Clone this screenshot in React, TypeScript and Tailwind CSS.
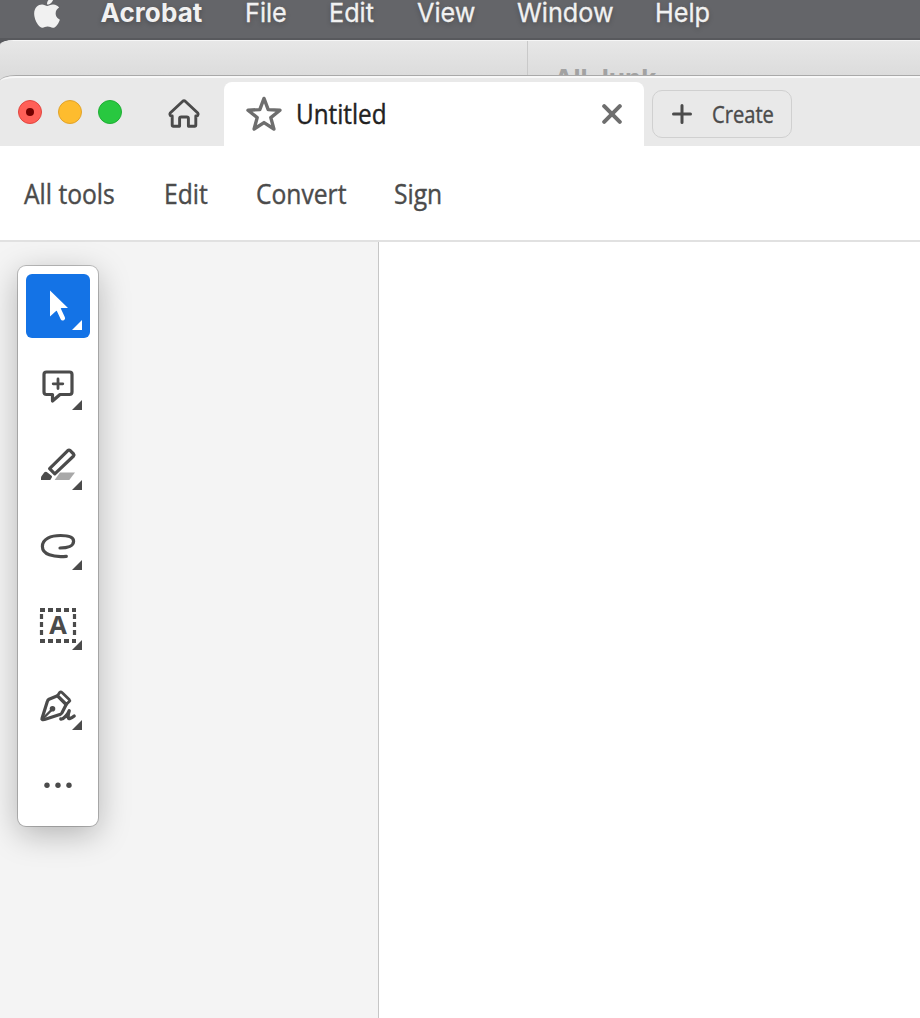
import type { ReactNode } from 'react';
import { FaApple } from 'react-icons/fa';

const menuItems = [
    { label: 'File', className: 'w-[84px]' },
    { label: 'Edit', className: 'w-[88px]' },
    { label: 'View', className: 'w-[100px]' },
    { label: 'Window', className: 'w-[138px]' },
    { label: 'Help', className: 'w-[60px]' },
];

const toolbarItems = [
    { label: 'All tools', className: 'w-[140px]' },
    { label: 'Edit', className: 'w-[92px]' },
    { label: 'Convert', className: 'w-[138px]' },
    { label: 'Sign', className: 'w-[60px]' },
];

function MenuBar() {
    return (
        <header className="flex h-[39px] shrink-0 items-start border-b border-[#58595d] bg-[#646569] font-['Inter',sans-serif] text-[26px] leading-[26px] text-[#f1f1f1] [text-shadow:0_2px_5px_rgba(0,0,0,0.25)]">
            <FaApple className="-mt-[5px] ml-[33px] h-[35px] w-[28px] shrink-0" />
            <span className="ml-[39.5px] w-[144px] shrink-0 font-bold tracking-[0.1px]">Acrobat</span>
            {menuItems.map((item) => (
                <span key={item.label} className={`shrink-0 [-webkit-text-stroke:0.3px] ${item.className}`}>
                    <span className="inline-block origin-left scale-x-[0.97]">{item.label}</span>
                </span>
            ))}
        </header>
    );
}

function TrafficLights() {
    return (
        <div className="flex gap-4">
            <span className="flex size-6 items-center justify-center rounded-full border border-[#e2463f] bg-[#ff5f57]">
                <span className="size-2 rounded-full bg-[#730000]" />
            </span>
            <span className="size-6 rounded-full border border-[#e1a32a] bg-[#febc2e]" />
            <span className="size-6 rounded-full border border-[#1fae34] bg-[#28c840]" />
        </div>
    );
}

function TabBar() {
    return (
        <div className="flex h-[70px] shrink-0 items-end rounded-tl-[16px_6px] border-t-2 border-[#f8f8f8] bg-[#e9e9e9] font-['Open_Sans',sans-serif]">
            <div className="flex h-16 w-[224px] items-center pb-1 pl-[18px]">
                <TrafficLights />
                <svg className="ml-[45px] mt-[3px] size-[34px]" viewBox="0 0 34 34" fill="none" stroke="#4b4b4b" strokeWidth="2.9" strokeLinejoin="round">
                    <path d="M18.2 4.2 Q17 3.2 15.8 4.2 L3.2 16 Q2.3 17.2 3.2 18.3 Q4 19 5.2 19 V28 Q5.2 29.2 6.4 29.2 H12.6 V21.6 Q12.6 20 14.2 20 H19.8 Q21.4 20 21.4 21.6 V29.2 H27.6 Q28.8 29.2 28.8 28 V19 Q30 19 30.8 18.3 Q31.7 17.2 30.8 16 Z" />
                </svg>
            </div>
            <div className="flex h-16 w-[420px] items-center rounded-t-lg bg-white pl-[21px]">
                <svg className="size-[38px] shrink-0" viewBox="0 0 38 38" fill="none" stroke="#6e6e6e" strokeWidth="3.4" strokeLinejoin="round">
                    <path d="M19 3.4 L23.2 14.6 L35 15.2 L25.8 22.6 L28.9 34 L19 27.6 L9.1 34 L12.2 22.6 L3 15.2 L14.8 14.6 Z" />
                </svg>
                <span className="ml-[13px] w-[306px] pt-0.5 text-[26.5px] text-[#222] [-webkit-text-stroke:0.4px]">
                    <span className="inline-block origin-left scale-x-[0.915]">Untitled</span>
                </span>
                <svg className="size-5 shrink-0" viewBox="0 0 20 20" stroke="#6e6e6e" strokeWidth="4" strokeLinecap="round">
                    <path d="M2.2 2.2 L17.8 17.8 M17.8 2.2 L2.2 17.8" />
                </svg>
            </div>
            <div className="flex h-16 items-center pl-2">
                <button className="flex h-12 w-[140px] items-center rounded-[10px] border-[1.5px] border-[#d0d0d0] pl-[19px] text-[23px] text-[#4b4b4b] [-webkit-text-stroke:0.4px]">
                    <svg className="size-5 shrink-0" viewBox="0 0 20 20" stroke="#4b4b4b" strokeWidth="3" strokeLinecap="round">
                        <path d="M10 1.5 V18.5 M1.5 10 H18.5" />
                    </svg>
                    <span className="ml-5 inline-block origin-left scale-x-[0.875]">Create</span>
                </button>
            </div>
        </div>
    );
}

function Toolbar() {
    return (
        <nav className="flex h-24 shrink-0 items-center border-b-2 border-[#e1e1e1] bg-white pl-6 pt-[3px] font-['Open_Sans',sans-serif] text-[26.5px] text-[#4b4b4b] [-webkit-text-stroke:0.4px]">
            {toolbarItems.map((item) => (
                <span key={item.label} className={`shrink-0 ${item.className}`}>
                    <span className="inline-block origin-left scale-x-[0.93]">{item.label}</span>
                </span>
            ))}
        </nav>
    );
}

interface ToolProps {
    active?: boolean;
    flyout?: boolean;
    children: ReactNode;
}

function Tool({ active = false, flyout = true, children }: ToolProps) {
    return (
        <button className={`size-16 rounded-md ${active ? 'bg-[#1473e6] text-white' : 'text-[#4b4b4b]'}`}>
            <svg className="size-16" viewBox="0 0 64 64" fill="none" stroke="currentColor" strokeWidth="3.2" strokeLinecap="round" strokeLinejoin="round">
                {children}
                {flyout && <path d="M46 56 H56 V46 Z" fill="currentColor" stroke="none" />}
            </svg>
        </button>
    );
}

function ToolPalette() {
    return (
        <aside className="ml-[18px] mt-6 flex h-[560px] w-20 flex-col gap-4 rounded-lg bg-white p-2 shadow-[0_0_0_1px_rgba(0,0,0,0.22),0_8px_32px_rgba(0,0,0,0.27)]">
            <Tool active>
                <path d="M24 16.5 V42.5 L29.8 37.2 L35.5 34 H42 Z" fill="currentColor" stroke="none" />
                <path d="M32 34 L36.8 44.2" strokeWidth="4.6" />
            </Tool>
            <Tool>
                <path d="M20.5 18 H43.5 Q46 18 46 20.5 V38 Q46 40.5 43.5 40.5 H34 L26.5 47 V40.5 H20.5 Q18 40.5 18 38 V20.5 Q18 18 20.5 18 Z" />
                <path d="M32 25 V34.6 M27.2 29.8 H36.8" strokeWidth="2.8" />
            </Tool>
            <Tool>
                <path d="M34 38.6 H49 L43.3 46 H28.6 Z" fill="#a8a8a8" stroke="none" />
                <path d="M41.8 16.6 Q43 15.6 44.2 16.6 L47.6 20 Q48.5 21 47.6 22 L28.8 39.8 L23.6 34.6 Z" />
                <path d="M18.4 38.2 Q20 37 21.4 38.4 L25.6 41.8 Q26.4 42.6 25.8 43.6 L24.3 46 H15 V44 Q15 42.8 15.8 41.8 Z" fill="currentColor" stroke="none" />
            </Tool>
            <Tool>
                <path d="M40.3 42.3 C27 43.5 16.4 40.5 16.4 32.5 C16.4 24.8 25 21.5 34.5 21.5 C42.5 21.5 47.6 23.2 47.6 27.2 C47.6 31.6 42 34 34 34" />
            </Tool>
            <Tool>
                <g strokeLinecap="butt">
                    <path d="M14 16 H50 M14 47 H50" strokeWidth="4" strokeDasharray="5 3" />
                    <path d="M15.5 20 V43 M48.5 20 V43" strokeDasharray="5 3" />
                </g>
                <text x="32" y="40" textAnchor="middle" fill="currentColor" stroke="none" className="font-['Open_Sans',sans-serif] text-[25.5px] font-bold">
                    A
                </text>
            </Tool>
            <Tool>
                <path d="M16 44.5 L21.4 27.2 Q21.8 25.8 23 25.2 L31.5 21.8 L40.2 30.5 L36 38.8 Q35.2 40.2 33.8 40.6 L18.5 45.5 Q15.3 46 16 44.5 Z" />
                <path d="M31.5 21.8 L33.6 18.6 Q34.8 17.4 36 18.6 L43.2 25.4 Q44.2 26.5 43.2 27.6 L40.2 30.5 Z" strokeWidth="2.8" />
                <path d="M17 44.5 L26.5 35" strokeWidth="2.4" />
                <circle cx="26.5" cy="34.8" r="2.8" fill="currentColor" stroke="none" />
                <path d="M34.8 45 C38 45.5 42 39.5 43.2 36.8 C42 40 41.5 45 43.5 44.6 Q46 43.8 48.2 42" strokeWidth="3.3" />
            </Tool>
            <Tool flyout={false}>
                <g fill="currentColor" stroke="none">
                    <circle cx="21" cy="31.3" r="2.7" />
                    <circle cx="32" cy="31.3" r="2.7" />
                    <circle cx="43" cy="31.3" r="2.7" />
                </g>
            </Tool>
        </aside>
    );
}

export default function App() {
    return (
        <div className="flex h-[1018px] w-[920px] flex-col overflow-hidden bg-[#58595d]">
            <MenuBar />
            <div className="mt-px flex grow flex-col rounded-tl-[14px_5px] border-t border-[#f6f6f6] bg-[#dcdcdc]">
                <div className="flex h-[34px] shrink-0 overflow-hidden rounded-tl-[14px_5px] bg-linear-to-b from-[#e7e7e7] to-[#dcdcdc]">
                    <div className="w-[528px] shrink-0 border-r border-[#c9c9c9]" />
                    <span className="ml-[26px] mt-[18px] font-['Inter',sans-serif] text-[26px] font-bold text-[#a2a2a2]">
                        All Junk
                    </span>
                </div>
                <div className="flex grow flex-col rounded-tl-[16px_6px] border-t border-[#a9a9a9]">
                    <TabBar />
                    <Toolbar />
                    <main className="flex grow">
                        <div className="w-[379px] border-r border-[#c6c6c6] bg-[#f4f4f4]">
                            <ToolPalette />
                        </div>
                        <div className="grow bg-white" />
                    </main>
                </div>
            </div>
        </div>
    );
}
